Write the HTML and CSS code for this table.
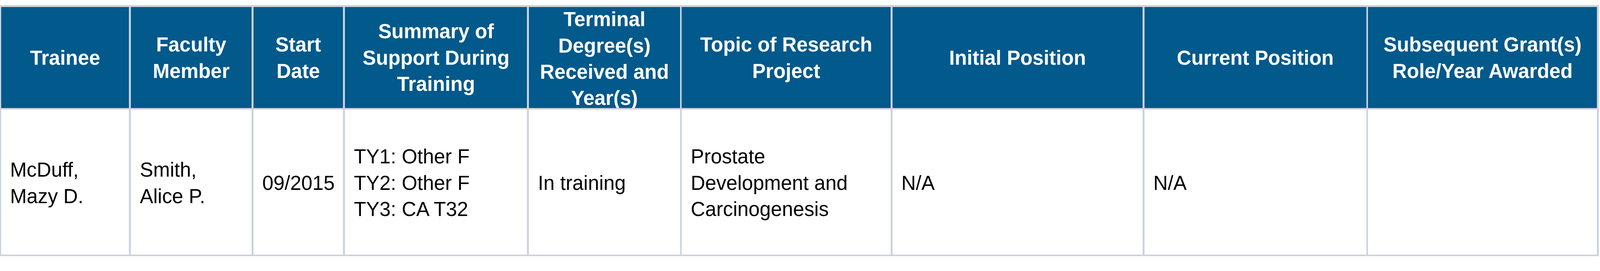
FILE: index.html
```html
<!DOCTYPE html>
<html lang="en">
<head>
<meta charset="utf-8">
<title>Trainee Table</title>
<link rel="stylesheet" href="styles.css">
</head>
<body>
<div class="table">
  <div class="th">Trainee</div>
  <div class="th">Faculty<br>Member</div>
  <div class="th">Start<br>Date</div>
  <div class="th">Summary of<br>Support During<br>Training</div>
  <div class="th th-tall">Terminal<br>Degree(s)<br>Received and<br>Year(s)</div>
  <div class="th">Topic of Research<br>Project</div>
  <div class="th">Initial Position</div>
  <div class="th">Current Position</div>
  <div class="th">Subsequent Grant(s)<br>Role/Year Awarded</div>

  <div class="td">McDuff,<br>Mazy D.</div>
  <div class="td">Smith,<br>Alice P.</div>
  <div class="td">09/2015</div>
  <div class="td">TY1: Other F<br>TY2: Other F<br>TY3: CA T32</div>
  <div class="td">In training</div>
  <div class="td">Prostate<br>Development and<br>Carcinogenesis</div>
  <div class="td">N/A</div>
  <div class="td">N/A</div>
  <div class="td"></div>
</div>
</body>
</html>
```

FILE: styles.css
```css
:root {
  --u: calc(100vw / 4313);
}

html, body {
  margin: 0;
  padding: 0;
  background: #ffffff;
  overflow: hidden;
}

body {
  font-family: "Liberation Sans", Arial, sans-serif;
}

.table {
  margin-top: calc(14 * var(--u));
  width: max-content;
  display: grid;
  grid-template-columns:
    calc(345 * var(--u)) calc(325 * var(--u)) calc(242 * var(--u))
    calc(491 * var(--u)) calc(407 * var(--u)) calc(563 * var(--u))
    calc(674 * var(--u)) calc(598 * var(--u)) calc(617 * var(--u));
  grid-template-rows: calc(273 * var(--u)) calc(392 * var(--u));
  column-gap: calc(5 * var(--u));
  row-gap: calc(4 * var(--u));
  padding: calc(5 * var(--u)) calc(5 * var(--u)) calc(4 * var(--u)) calc(3 * var(--u));
  background: #cdd3dc;
}

.th {
  background: #02598b;
  color: #ffffff;
  font-weight: bold;
  font-size: calc(54 * var(--u));
  line-height: calc(71 * var(--u));
  text-align: center;
  display: flex;
  align-items: center;
  justify-content: center;
  overflow: hidden;
  padding-top: calc(2 * var(--u));
}

.th-tall {
  padding-top: calc(7 * var(--u));
}

.td {
  background: #ffffff;
  color: #000000;
  font-size: calc(54 * var(--u));
  line-height: calc(71 * var(--u));
  display: flex;
  align-items: center;
  padding: calc(5 * var(--u)) calc(24 * var(--u)) 0 calc(24 * var(--u));
}
```
